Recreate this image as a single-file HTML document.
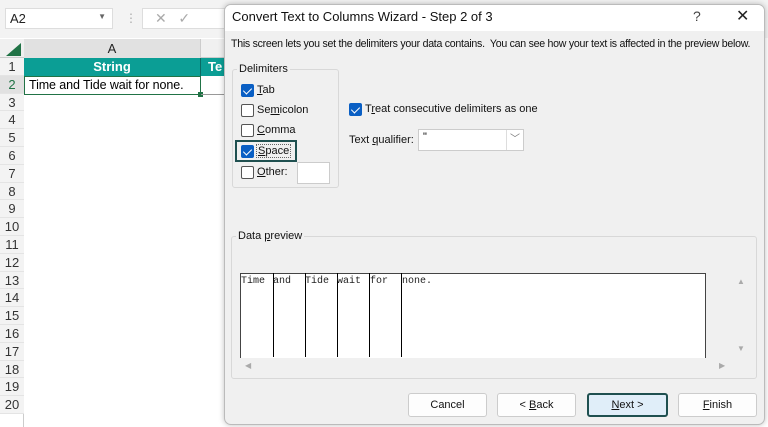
<!DOCTYPE html>
<html><head><style>
*{margin:0;padding:0;box-sizing:border-box}
body{width:768px;height:427px;overflow:hidden;background:#fff;font-family:"Liberation Sans",sans-serif;position:relative}
.a{position:absolute}
.rn{position:absolute;left:0;width:24px;text-align:center;font-size:13px;color:#333;background:#f3f3f3;border-bottom:1px solid #e4e4e4}
.cb{position:absolute;width:13px;height:13px;border:1px solid #555;border-radius:2px;background:#fff}
.cb.on{background:#0a5fc4;border-color:#0a5fc4}
.cb.on:after{content:"";position:absolute;left:3px;top:1px;width:4px;height:7px;border:solid #fff;border-width:0 1.2px 1.2px 0;transform:rotate(45deg)}
.t{position:absolute;font-size:11px;color:#111;white-space:nowrap}
.btn{position:absolute;top:393px;height:24px;background:#fdfdfd;border:1px solid #ccc;border-radius:3px;font-size:11px;text-align:center;line-height:22px;color:#111}
.vl{position:absolute;top:273px;height:84px;width:1px;background:#000}
.w{position:absolute;top:276px;font-family:'Liberation Mono',monospace;font-size:10px;color:#222}
</style></head><body>
<div class="a" style="left:0;top:0;width:768px;height:38px;background:#f3f3f3"></div>
<div class="a" style="left:5px;top:8px;width:108px;height:21px;background:#fff;border:1px solid #ddd;font-size:13px;padding:2px 4px;color:#222">A2<span style="position:absolute;right:6px;top:3px;font-size:8px;color:#666">▼</span></div>
<div class="a" style="left:125px;top:11px;color:#aaa;font-size:12px">⋮</div>
<div class="a" style="left:142px;top:8px;width:90px;height:21px;background:#fff;border:1px solid #ddd;color:#aaa;font-size:14px;padding:1px 12px">✕ &nbsp;&nbsp;✓</div>
<div class="a" style="left:0;top:39px;width:224px;height:19px;background:#f0f0f0;border-bottom:1px solid #ccc"></div>
<div class="a" style="left:24px;top:39px;width:177px;height:19px;background:#e1e1e1;text-align:center;font-size:13px;color:#222;line-height:19px;border-right:1px solid #ccc">A</div>
<div class="a" style="left:6px;top:43px;width:0;height:0;border-left:15px solid transparent;border-bottom:13px solid #217346"></div>
<div class="a" style="left:24px;top:58px;width:200px;height:18px;background:#0b9e95"></div>
<div class="a" style="left:24px;top:58px;width:177px;height:18px;color:#fff;font-weight:bold;font-size:13px;text-align:center;line-height:18px;border-right:1px solid #0a6a64">String</div>
<div class="a" style="left:208px;top:58px;color:#fff;font-weight:bold;font-size:13px;line-height:18px">Te</div>
<div class="a" style="left:24px;top:76px;width:177px;height:19px;border:1.5px solid #217346;font-size:12.5px;line-height:16px;padding-left:4px;color:#000;white-space:nowrap;letter-spacing:-0.1px">Time and Tide wait for none.</div>
<div class="a" style="left:198px;top:92px;width:5px;height:5px;background:#217346"></div>
<div class="a" style="left:201px;top:94px;width:23px;height:1px;background:#999"></div>
<div class="a" style="left:23px;top:58px;width:1px;height:369px;background:#ccc"></div>
<div id="rows"></div>
<script>
var h="";for(var i=1;i<=20;i++){var t=58+(i-1)*17.8;h+='<div class="rn" style="top:'+t+'px;height:17.8px;line-height:17.8px'+(i==2?';background:#e1e1e1;color:#217346':'')+'">'+i+'</div>';}
document.getElementById("rows").innerHTML=h;
</script>
<div class="a" style="left:224px;top:4px;width:541px;height:421px;background:#f0f0f0;border:1px solid #bbb;border-radius:7px;box-shadow:0 0 6px rgba(0,0,0,.25);overflow:hidden">
<div class="a" style="left:0;top:0;width:541px;height:26px;background:#fff"></div>
</div>
<div class="t" style="left:232px;top:9px;font-size:13px">Convert Text to Columns Wizard - Step 2 of 3</div>
<div class="t" style="left:693px;top:8px;font-size:14px;color:#444">?</div>
<div class="t" style="left:736px;top:6px;font-size:16px;color:#222">✕</div>
<div class="t" style="left:231px;top:38px;font-size:10.6px;letter-spacing:-0.27px">This screen lets you set the delimiters your data contains.&nbsp; You can see how your text is affected in the preview below.</div>
<div class="a" style="left:232px;top:69px;width:107px;height:119px;border:1px solid #d8d8d8;border-radius:3px"></div>
<div class="t" style="left:237px;top:63px;background:#f0f0f0;padding:0 2px">Delimiters</div>
<div class="cb on" style="left:241px;top:84px"></div><div class="t" style="left:257px;top:84px"><u>T</u>ab</div>
<div class="cb" style="left:241px;top:104px"></div><div class="t" style="left:257px;top:104px">Se<u>m</u>icolon</div>
<div class="cb" style="left:241px;top:124px"></div><div class="t" style="left:257px;top:124px"><u>C</u>omma</div>
<div class="a" style="left:235px;top:140px;width:62px;height:22px;border:2px solid #1f5050"></div>
<div class="cb on" style="left:241px;top:145px"></div><div class="t" style="left:256px;top:144px;border:1px dotted #666;padding:0 1px"><u>S</u>pace</div>
<div class="cb" style="left:241px;top:166px"></div><div class="t" style="left:257px;top:166px"><u>O</u>ther:</div>
<div class="a" style="left:297px;top:162px;width:33px;height:22px;background:#fff;border:1px solid #ccc"></div>
<div class="cb on" style="left:349px;top:103px"></div><div class="t" style="left:365px;top:103px">T<u>r</u>eat consecutive delimiters as one</div>
<div class="t" style="left:349px;top:134px">Text <u>q</u>ualifier:</div>
<div class="a" style="left:418px;top:129px;width:106px;height:22px;background:#fff;border:1px solid #ccc;font-size:11px;padding:1px 4px">"<span style="position:absolute;right:0;top:0;width:17px;height:20px;border-left:1px solid #ddd;text-align:center;color:#777;font-size:10px;line-height:20px">﹀</span></div>
<div class="a" style="left:231px;top:236px;width:526px;height:143px;border:1px solid #d8d8d8;border-radius:3px"></div>
<div class="t" style="left:236px;top:230px;background:#f0f0f0;padding:0 2px">Data <u>p</u>review</div>
<div class="a" style="left:240px;top:273px;width:466px;height:85px;background:#fff;border:1px solid #444;border-bottom:none"></div>
<div class="vl" style="left:273px"></div><div class="vl" style="left:305px"></div><div class="vl" style="left:337px"></div><div class="vl" style="left:369px"></div><div class="vl" style="left:401px"></div>
<div class="w" style="left:241px">Time</div><div class="w" style="left:273px">and</div><div class="w" style="left:305px">Tide</div><div class="w" style="left:337px">wait</div><div class="w" style="left:370px">for</div><div class="w" style="left:402px">none.</div>
<div class="a" style="left:737px;top:277px;font-size:8px;color:#aaa">▲</div>
<div class="a" style="left:737px;top:344px;font-size:8px;color:#aaa">▼</div>
<div class="a" style="left:245px;top:361px;font-size:8px;color:#aaa">◀</div>
<div class="a" style="left:719px;top:361px;font-size:8px;color:#aaa">▶</div>
<div class="btn" style="left:408px;width:79px">Cancel</div>
<div class="btn" style="left:497px;width:79px">&lt; <u>B</u>ack</div>
<div class="btn" style="left:587px;width:81px;background:#e0eef9;border:2px solid #1f5050;line-height:20px"><u>N</u>ext &gt;</div>
<div class="btn" style="left:678px;width:79px"><u>F</u>inish</div>
</body></html>
